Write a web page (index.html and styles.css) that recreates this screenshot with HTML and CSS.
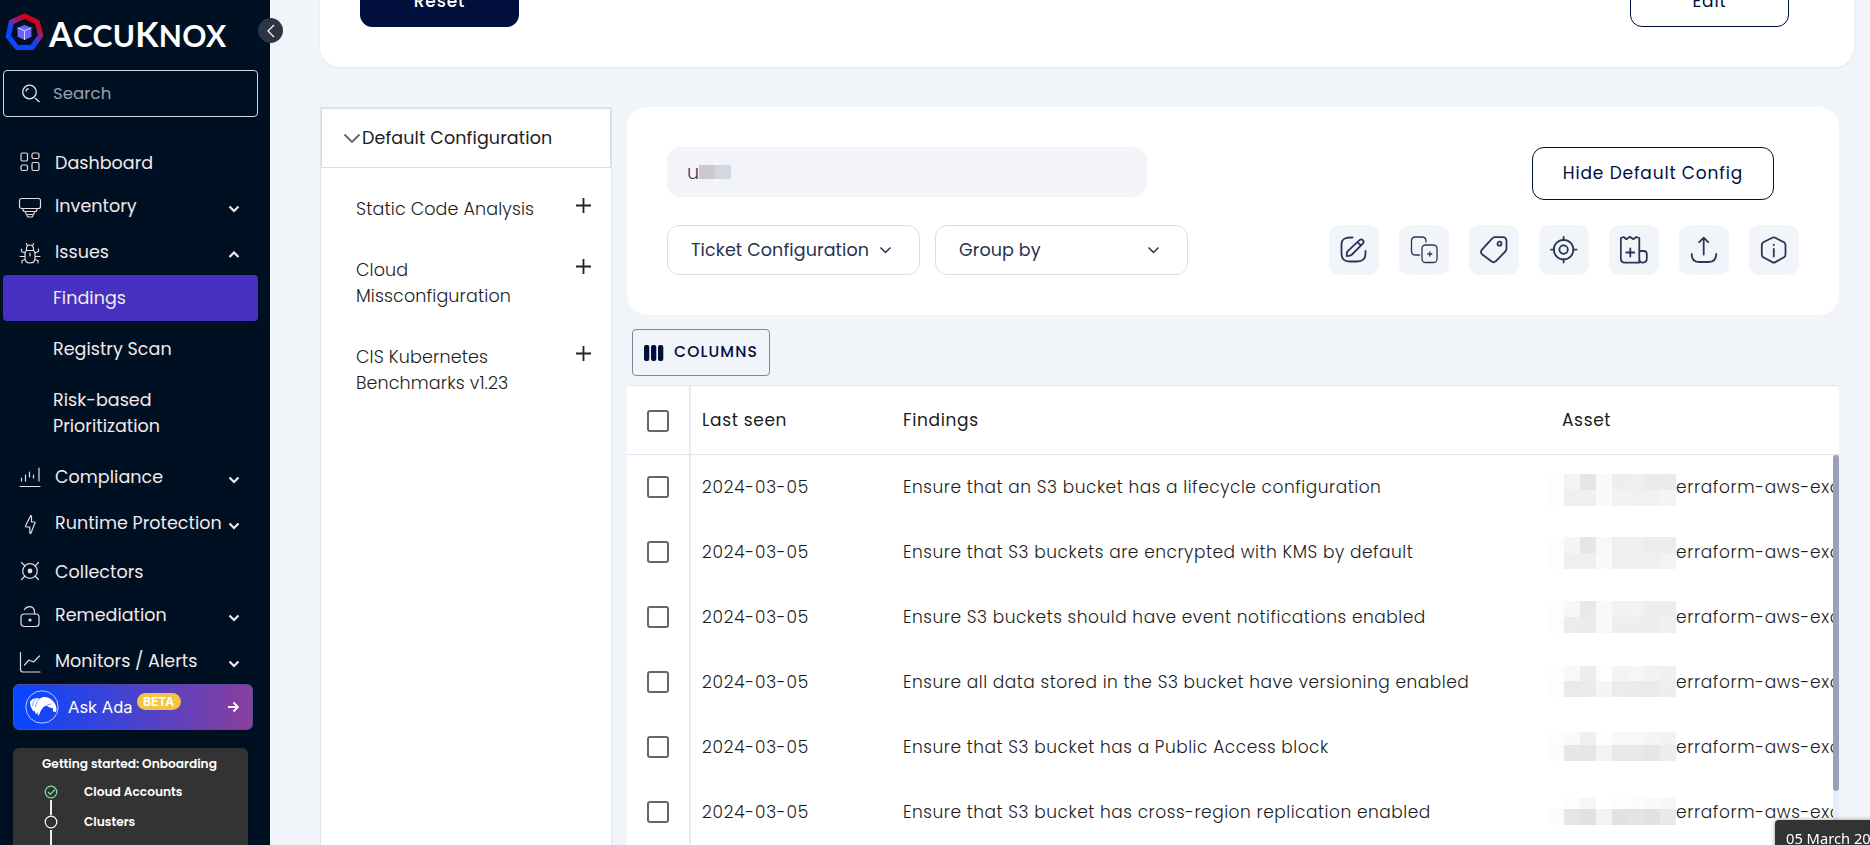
FILE: index.html
```
<!DOCTYPE html>
<html lang="en">
<head>
    <meta charset="UTF-8">
    <meta name="viewport" content="width=device-width, initial-scale=1.0">
    <title>AccuKnox - Findings</title>
    <link rel="stylesheet" href="styles.css">
</head>
<body>
    <aside class="sidebar">
        <div class="logo">
            <svg width="228" height="44" viewBox="0 0 228 44">
                <defs>
                    <linearGradient id="ring" x1="0.75" y1="0.1" x2="0.3" y2="0.8">
                        <stop offset="0.1" stop-color="#d0021b"/>
                        <stop offset="0.45" stop-color="#7a2a9a"/>
                        <stop offset="0.75" stop-color="#0a45ff"/>
                    </linearGradient>
                </defs>
                <path d="M24.500 4.200L37.300 10.200L40.700 23.500L32 35.500L17 35.500L8.300 24.500L11.300 10.200Z" fill="none" stroke="url(#ring)" stroke-width="5.200" stroke-linejoin="round"/>
                <path d="M24.500 13L31.400 15.800V24.700L24.500 28L17.600 24.700V15.800Z" fill="#6a63ff"/>
                <path d="M17.600 15.800L24.500 18.700L31.400 15.800M24.500 18.700V28" fill="none" stroke="#d5d4ff" stroke-width="1"/>
                <text x="49" y="35" textLength="177" class="logo-text"><tspan class="cap">A</tspan>CCU<tspan class="cap">K</tspan>NOX</text>
            </svg>
        </div>
        <button class="collapse">
            <svg width="10" height="14" viewBox="0 0 10 14"><path d="M8 1L2 7l6 6"/></svg>
        </button>

        <label class="search">
            <svg width="20" height="20" viewBox="0 0 20 20"><circle cx="8.500" cy="8" r="6.800"/><path d="M4.800 7.500a3.600 3.600 0 0 1 2.800-3M14 14l4.500 4"/></svg>
            <span>Search</span>
        </label>

        <nav class="menu">
            <a class="item first">
                <svg width="24" height="24" viewBox="0 0 24 24"><rect x="3" y="3" width="6.500" height="8" rx="1.500"/><rect x="14" y="3" width="7" height="5.500" rx="1.500"/><rect x="3" y="15" width="6.500" height="5.500" rx="1.500"/><rect x="14" y="12.500" width="7" height="8" rx="1.500"/></svg>
                <span>Dashboard</span>
            </a>
            <a class="item">
                <svg width="24" height="24" viewBox="0 0 24 24"><rect x="1.500" y="2.500" width="21" height="10" rx="2"/><path d="M5 13v.5q0 2 2 2h10q2 0 2-2V13M7.500 16.500q.3 2 2 2h5q1.700 0 2-2M9 19.500q.5 1.500 1.500 1.500h3q1 0 1.500-1.500"/></svg>
                <span>Inventory</span>
                <svg class="arrow" width="12" height="8" viewBox="0 0 12 8"><path d="M1.500 1.500L6 6l4.500-4.500"/></svg>
            </a>
            <a class="item issues">
                <svg width="24" height="24" viewBox="0 0 24 24"><path d="M8.500 6.500a3.500 3.500 0 0 1 7 0v2h-7zM8.500 8.500q-1.500 1-1.500 3V16q0 5 5 5t5-5v-4.500q0-2-1.500-3M12 11v3M9 3L8.500 1.500M15 3l.5-1.500M7 11L3.500 9.500V7M17 11l3.500-1.500V7M7 14.500H2M17 14.500h5M7.500 17.500L4 18.500V21M16.500 17.500l3.500 1V21"/></svg>
                <span>Issues</span>
                <svg class="arrow" width="12" height="8" viewBox="0 0 12 8"><path d="M1.500 6L6 1.500 10.500 6"/></svg>
            </a>
            <div class="submenu">
                <a class="active">Findings</a>
                <a class="registry">Registry Scan</a>
                <a class="risk">Risk-based<br>Prioritization</a>
            </div>
            <a class="item">
                <svg width="24" height="24" viewBox="0 0 24 24"><path d="M3.500 11v3M7.500 8v6M11.500 5v5M15.500 8v3M21 1v13M2 19.500h20"/></svg>
                <span>Compliance</span>
                <svg class="arrow" width="12" height="8" viewBox="0 0 12 8"><path d="M1.500 1.500L6 6l4.500-4.500"/></svg>
            </a>
            <a class="item">
                <svg width="24" height="24" viewBox="0 0 24 24"><path d="M12.500 3q.5-.7 1 .2V9h2.800q1.200.2.500 1.300L13 20q-1 1.200-1.200 0v-6H8.500q-1.500-.3-.8-1.500z"/></svg>
                <span>Runtime Protection</span>
                <svg class="arrow" width="12" height="8" viewBox="0 0 12 8"><path d="M1.500 1.500L6 6l4.500-4.500"/></svg>
            </a>
            <a class="item collectors">
                <svg width="24" height="24" viewBox="0 0 24 24"><circle cx="12" cy="12" r="7.300"/><circle cx="12" cy="12" r="2.400" class="dot"/><path d="M3.500 3.500L7 7M20.500 3.500L17 7M3.500 20.500L7 17M20.500 20.500L17 17"/></svg>
                <span>Collectors</span>
            </a>
            <a class="item">
                <svg width="24" height="24" viewBox="0 0 24 24"><rect x="3" y="9" width="18" height="12.500" rx="3"/><path d="M6.500 4.500q2-3 5.500-2.800 4.300.5 4.500 5V9"/><circle cx="12" cy="15" r="1.600" class="dot"/></svg>
                <span>Remediation</span>
                <svg class="arrow" width="12" height="8" viewBox="0 0 12 8"><path d="M1.500 1.500L6 6l4.500-4.500"/></svg>
            </a>
            <a class="item">
                <svg width="24" height="24" viewBox="0 0 24 24"><path d="M2.500 1.500v17q0 2.500 2.500 2.500h17M6.500 14l4.500-5 4.500 2L21.500 5"/></svg>
                <span>Monitors / Alerts</span>
                <svg class="arrow" width="12" height="8" viewBox="0 0 12 8"><path d="M1.500 1.500L6 6l4.500-4.500"/></svg>
            </a>
        </nav>

        <div class="ada">
            <svg width="34" height="36" viewBox="0 0 34 36">
                <circle cx="17" cy="18" r="16.200" fill="none" stroke="#b9cbff" stroke-width="1"/>
                <path d="M5 12.500Q8 8 15 9.500 19 7 24 9q6 3 7.500 10l-.5 4-3-.5v-3l-4.500-1.500q-2-2.500-5 0-3 3-4 7l-1.500 2-.5-4-1.500 2.500-1.500-4-1 1Q5 18 5 12.500z" fill="#fff"/>
                <path d="M15 9.500q-4 2-4.500 8.500M10.500 10q-3 2-3 7M21 18q1-3 5-3" fill="none" stroke="#5b84ff" stroke-width=".8"/>
            </svg>
            <span class="ada-name">Ask Ada</span>
            <span class="beta">BETA</span>
            <svg class="go" width="12" height="12" viewBox="0 0 12 12"><path d="M1 6h10M6.500 1.500L11 6l-4.500 4.500"/></svg>
        </div>

        <div class="onboarding">
            <h4>Getting started: Onboarding</h4>
            <div class="step done">
                <svg width="14" height="14" viewBox="0 0 14 14"><circle cx="7" cy="7" r="5.800"/><path d="M4 7l2.300 2.300L11 4.500"/></svg>
                <span>Cloud Accounts</span>
            </div>
            <div class="step">
                <svg width="14" height="14" viewBox="0 0 14 14"><circle cx="7" cy="7" r="5.800"/></svg>
                <span>Clusters</span>
            </div>
        </div>
    </aside>

    <main>
        <section class="card filters">
            <button class="reset">Reset</button>
            <button class="edit">Edit</button>
        </section>

        <div class="columns">
            <section class="config">
                <div class="config-head">
                    <svg width="18" height="11" viewBox="0 0 18 11"><path d="M1.500 1.500L9 9l7.500-7.500"/></svg>
                    <span>Default Configuration</span>
                </div>
                <ul>
                    <li>
                        <span>Static Code Analysis</span>
                        <svg width="15" height="15" viewBox="0 0 15 15"><path d="M7.500 0v15M0 7.500h15"/></svg>
                    </li>
                    <li>
                        <span>Cloud<br>Missconfiguration</span>
                        <svg width="15" height="15" viewBox="0 0 15 15"><path d="M7.500 0v15M0 7.500h15"/></svg>
                    </li>
                    <li>
                        <span>CIS Kubernetes<br>Benchmarks v1.23</span>
                        <svg width="15" height="15" viewBox="0 0 15 15"><path d="M7.500 0v15M0 7.500h15"/></svg>
                    </li>
                </ul>
            </section>

            <section class="results">
                <div class="panel">
                    <div class="row">
                        <div class="query">u<i></i><i></i></div>
                        <button class="hide">Hide Default Config</button>
                    </div>
                    <div class="row">
                        <div class="selects">
                            <div class="select">
                                <span>Ticket Configuration</span>
                                <svg width="13" height="8" viewBox="0 0 13 8"><path d="M1.500 1.500L6.500 6.500l5-5"/></svg>
                            </div>
                            <div class="select">
                                <span>Group by</span>
                                <svg width="13" height="8" viewBox="0 0 13 8"><path d="M1.500 1.500L6.500 6.500l5-5"/></svg>
                            </div>
                        </div>
                        <div class="tools">
                            <button><svg width="28" height="28" viewBox="0 0 28 28"><path d="M12.500 1.500H10.500Q1.500 1.500 1.500 8v9.500Q1.500 25.500 9.500 25.500h7.500q8.500 0 8.500-8V15"/><path d="M19.500 4.200q1.700-1.600 3.300 0t0 3.400L12 18.500q-1.300 1.200-3 1.300l-2.300.2.100-2.500q0-1.500 1.200-2.700zM17.500 6.200l3.500 3.500"/></svg></button>
                            <button><svg class="thin" width="28" height="28" viewBox="0 0 28 28"><path d="M9.500 19H5.500Q1.500 19 1.500 15V5Q1.500 1 5.500 1h6.500q4 0 4 4V6"/><rect x="12" y="9" width="15" height="17.500" rx="3.500"/><path d="M19.800 16v4M17.800 18h4"/></svg></button>
                            <button><svg width="28" height="28" viewBox="0 0 28 28"><path d="M15 1.200h7.500q4 0 4 4V12.500q0 1.800-1.200 3l-9.600 9.800q-2.200 1.800-4.400 0L2 18.200q-2-2.200 0-4.500L12 2.700q1.200-1.500 3-1.500z"/><circle cx="19.500" cy="7.700" r="2"/></svg></button>
                            <button><svg width="28" height="28" viewBox="0 0 28 28"><circle cx="13.600" cy="13.600" r="9.800"/><circle cx="13.600" cy="13.600" r="4.200"/><path d="M13.600 1v3.200M13.600 23.400v3.200M1 13.600h3.200M23.400 13.600h3.200"/></svg></button>
                            <button><svg width="28" height="28" viewBox="0 0 28 28"><path d="M.8 2l3-1 2.500 2.200L9.800.8l3.500 2.400L16.300 1l3 1v24.600H4.800q-4 0-4-4zM19.300 15H23.500q3.300 0 3.300 3V22.600q0 4-4 4-3.500 0-3.500-3.500M10.300 12.500v8M6.300 16.500h8"/></svg></button>
                            <button><svg width="28" height="28" viewBox="0 0 28 28"><path d="M13.700 18.500V2M9.200 6.200L13.700 1.700l4.500 4.500M1.700 18Q1.700 26 9 26h9.500q7.500 0 7.800-8"/></svg></button>
                            <button><svg width="28" height="28" viewBox="0 0 28 28"><path d="M12.300 1.800q1.500-.8 3 0l8.700 4.500q1.500 1 1.500 2.800v9.400q0 1.800-1.500 2.800l-8.700 4.800q-1.500.8-3 0l-9-4.800Q1.800 20.300 1.800 18.500V9.100Q1.800 7.300 3.300 6.300zM13.800 13v7.500M13.800 8.700v.3"/></svg></button>
                        </div>
                    </div>
                </div>

                <button class="columns-btn">
                    <svg width="20" height="16" viewBox="0 0 20 16"><rect width="5.300" height="16" rx="2"/><rect x="7" width="5.300" height="16" rx="2"/><rect x="14" width="5.300" height="16" rx="2"/></svg>
                    <span>COLUMNS</span>
                </button>

                <div class="table">
                    <div class="tr th">
                        <div class="check"><i></i></div>
                        <div>Last seen</div>
                        <div>Findings</div>
                        <div>Asset</div>
                    </div>
                    <div class="body">
                        <div id="rows"></div>
                        <div class="scrollbar"><i></i></div>
                    </div>
                </div>
            </section>
        </div>
    </main>

    <div class="tooltip">05 March 2024</div>

    <script>
        const findings = [
            'Ensure that an S3 bucket has a lifecycle configuration',
            'Ensure that S3 buckets are encrypted with KMS by default',
            'Ensure S3 buckets should have event notifications enabled',
            'Ensure all data stored in the S3 bucket have versioning enabled',
            'Ensure that S3 bucket has a Public Access block',
            'Ensure that S3 bucket has cross-region replication enabled'
        ];

        // redacted part of the asset name, 8 x 2 tiles per row
        const tiles = [
            ['fefdfb f3f3f3 e5e5e5 f9f9f9 eeeeee efefef e9ebea ebebea', 'fdfdfd efefef f0f0f0 fafafa f2f2f2 f1f1f1 f0f1f1 f5f5f3'],
            ['fdfdfd f5f5f5 e6e6e6 f8f8f8 efefef efefef ececec ececec', 'fdfdfd eef0ef efefef fafafa f0f0f0 efefef efefef f3f3f3'],
            ['fefdfb f7f7f7 e9e9e9 f9f9f9 f2f2f2 f3f3f3 eeeeee eeeeee', 'fdfdfd ebedec ebebeb f8f8f8 eeeeee eeeeee ededed f0f0f0'],
            ['fefefe f8f8f8 ededed fdfdfd f4f4f4 f6f6f6 f2f2f2 f0f0f0', 'fefdfb e9eaed ebebeb f5f5f5 ececec ebebeb eaeaea efeeec'],
            ['fdfdfd fafafa f0f0f0 fdfdfd f8f8f8 f8f8f8 f5f5f5 f2f2f2', 'fdfcfb e6e7e9 e6e6e6 f4f4f4 e8e8e8 e8e8e8 e6e6e6 eeedeb'],
            ['ffffff fdfdfd f6f6f6 ffffff fdfdfd fcfcfc fafafa f6f6f6', 'fdfcfb e5e6e8 e1e1e1 f3f3f3 e2e2e2 e4e4e4 e1e1e1 eae9e7']
        ];

        // tiles sit on a 64px grid while the rows are 65px high
        function mosaic(rows, i) {
            let rects = '';
            rows.forEach((row, y) => row.split(' ').forEach((color, x) => {
                rects += `<rect x="${x * 16}" y="${y * 16}" width="16" height="16" fill="#${color}"/>`;
            }));
            return `<svg class="mosaic" width="128" height="32" style="margin-top: ${5 - 2 * i}px">${rects}</svg>`;
        }

        document.getElementById('rows').innerHTML = findings.map((text, i) => `
            <div class="tr">
                <div class="check"><i></i></div>
                <div class="date">2024-03-05</div>
                <div>${text}</div>
                <div class="asset">${mosaic(tiles[i], i)}<span>erraform-aws-example</span></div>
            </div>`).join('');
    </script>
</body>
</html>
```
FILE: styles.css
```
* {
    box-sizing: border-box;
}
body {
    display: flex;
    height: 100vh;
    margin: 0;
    overflow: hidden;
    font-family: Poppins, Inter, sans-serif;
    font-size: 17px;
    background-color: #f1f4f9;
    color: #1c1c1c;
}
button {
    font: inherit;
    padding: 0;
    cursor: pointer;
}
svg {
    flex: none;
}

/* sidebar */
.sidebar {
    position: relative;
    width: 270px;
    height: 845px;
    flex: none;
    background: #001023;
    color: #f3e9e9;
}
.logo {
    height: 70px;
    padding-top: 12px;
}
.logo svg {
    display: block;
}
.logo-text {
    font-family: Lato, sans-serif;
    font-weight: 700;
    font-size: 30px;
    fill: #fff;
}
.logo-text .cap {
    font-size: 34px;
}
.collapse {
    position: absolute;
    left: 258px;
    top: 18px;
    width: 25px;
    height: 25px;
    border: none;
    border-radius: 50%;
    background: #2d3542;
    display: flex;
    align-items: center;
    justify-content: center;
}
.collapse path {
    fill: none;
    stroke: #fff;
    stroke-width: 1.2;
}
.search {
    display: flex;
    align-items: center;
    width: 255px;
    height: 47px;
    margin-left: 3px;
    padding-left: 17px;
    gap: 12px;
    border: 1px solid #d5d9de;
    border-radius: 4px;
    color: #9aa3ad;
    font-size: 16.5px;
    letter-spacing: 0.1px;
}
.search svg {
    fill: none;
    stroke: #e8e8ea;
    stroke-width: 1.3;
}
.menu {
    padding-top: 26px;
    font-size: 17.5px;
    letter-spacing: 0.04px;
}
.item {
    display: flex;
    align-items: center;
    height: 46px;
    padding: 0 30px 0 18px;
    white-space: nowrap;
}
.item span {
    margin-left: 13px;
}
.item svg {
    position: relative;
    top: 2px;
    fill: none;
    stroke: #e6dcdc;
    stroke-width: 1.2;
    stroke-linejoin: round;
    stroke-linecap: round;
}
.item .dot {
    fill: #e6dcdc;
    stroke: none;
}
.item .arrow {
    margin-left: auto;
    top: 3px;
    stroke-width: 2.2;
    stroke: #f3e9e9;
    stroke-linecap: butt;
    stroke-linejoin: miter;
}
.item.first {
    height: 40px;
}
.item.first svg {
    top: -1px;
}
.item.collectors {
    padding-top: 6px;
}
.item.collectors svg {
    top: -1px;
}
.submenu a {
    display: flex;
    align-items: center;
    height: 57px;
    padding-left: 53px;
    line-height: 26px;
}
.submenu .active {
    width: 255px;
    height: 46px;
    margin-left: 3px;
    padding-left: 50px;
    border-radius: 4px;
    background: #4530c0;
}
.submenu .registry {
    padding-bottom: 2px;
}
.submenu .risk {
    height: 70px;
    margin-bottom: 6px;
}
.ada {
    display: flex;
    align-items: center;
    width: 240px;
    height: 46px;
    margin-left: 13px;
    padding: 0 13px 0 11px;
    border: 1px solid #5a4a9e;
    border-radius: 6px;
    background: linear-gradient(90deg, #0546ff, #8a3f9c);
    color: #fff;
    font-family: Inter, sans-serif;
}
.ada-name {
    margin-left: 9px;
    font-size: 16.5px;
}
.beta {
    margin: -12px 0 0 4px;
    width: 44px;
    height: 17px;
    border-radius: 9px;
    background: #f4c542;
    font-size: 12px;
    font-weight: 700;
    line-height: 17px;
    text-align: center;
}
.go {
    margin-left: auto;
}
.go path {
    fill: none;
    stroke: #fff;
    stroke-width: 1.8;
}
.onboarding {
    width: 235px;
    height: 110px;
    margin: 18px 0 0 13px;
    border-radius: 6px 6px 0 0;
    background: #333;
    color: #fff;
    font-size: 12.2px;
    font-weight: 600;
}
.onboarding h4 {
    margin: 0;
    padding: 8px 0 10px 29px;
    font-size: 12.2px;
    font-weight: 600;
    line-height: 15px;
}
.step {
    position: relative;
    display: flex;
    align-items: center;
    height: 30px;
    padding: 0 0 8px 31px;
    gap: 26px;
    line-height: 22px;
}
.step::after {
    content: "";
    position: absolute;
    left: 37px;
    top: 19px;
    width: 2px;
    height: 15px;
    background: #eee;
}
.step svg {
    fill: none;
    stroke: #fff;
    stroke-width: 1.2;
}
.step.done svg {
    stroke: #7ee0a3;
}

/* main area */
main {
    flex: 1;
    min-width: 0;
    padding-left: 50px;
}
.filters {
    display: flex;
    justify-content: space-between;
    align-items: flex-end;
    width: 1534px;
    height: 67px;
    padding: 0 65px 40px 40px;
    border-radius: 0 0 20px 20px;
    background: #fff;
    box-shadow: 0 1px 3px rgba(0, 0, 0, 0.06);
}
.filters button {
    flex: none;
    width: 159px;
    height: 53px;
    border-radius: 12px;
    letter-spacing: 0.9px;
}
.reset {
    border: 1px solid #000f3c;
    background: #000f3c;
    color: #fff;
    font-weight: 500;
}
.edit {
    border: 1px solid #000f3c;
    background: #fff;
    color: #000f3c;
}
.columns {
    display: flex;
    gap: 15px;
    margin-top: 40px;
}
.config {
    width: 292px;
    height: 760px;
    border: 1px solid #e0e4ee;
    background: #fff;
    font-size: 17.5px;
    letter-spacing: 0.12px;
}
.config-head {
    display: flex;
    align-items: center;
    height: 60px;
    padding-left: 21px;
    gap: 1px;
    border: 1px solid #d9dbec;
}
.config-head svg {
    fill: none;
    stroke: #666;
    stroke-width: 1.8;
}
.config ul {
    display: flex;
    flex-direction: column;
    gap: 35px;
    margin: 0;
    padding: 28px 20px 0 35px;
    list-style: none;
}
.config li {
    display: flex;
    justify-content: space-between;
    line-height: 26px;
    font-weight: 300;
}
.config li svg {
    margin-top: 2px;
    stroke: #222;
    stroke-width: 1.8;
}
.results {
    width: 1212px;
}
.panel {
    height: 208px;
    padding: 40px 40px 0;
    border-radius: 20px;
    background: #fff;
}
.row {
    display: flex;
    justify-content: space-between;
    height: 53px;
    margin-bottom: 25px;
}
.query {
    display: flex;
    align-items: center;
    width: 480px;
    height: 50px;
    padding-left: 20px;
    border-radius: 14px;
    background: #f3f4f9;
    color: #2b3a5c;
    font-size: 19px;
    font-weight: 300;
}
.query i {
    width: 16px;
    height: 14px;
    background: #ccc9ce;
}
.query i + i {
    background: #d3d8e0;
}
.hide {
    width: 242px;
    height: 53px;
    margin-right: 25px;
    padding-bottom: 2px;
    border: 1px solid #000f3c;
    border-radius: 12px;
    background: #fff;
    color: #000f3c;
    letter-spacing: 0.85px;
}
.selects {
    display: flex;
    gap: 15px;
}
.select {
    display: flex;
    align-items: center;
    justify-content: space-between;
    width: 253px;
    height: 50px;
    padding: 0 27px 0 23px;
    border: 1px solid #d9deea;
    border-radius: 12px;
    color: #26324f;
    font-size: 17.5px;
    letter-spacing: 0.12px;
    white-space: nowrap;
}
.select svg {
    fill: none;
    stroke: #26324f;
    stroke-width: 1.5;
}
.tools {
    display: flex;
    gap: 20px;
}
.tools button {
    display: flex;
    align-items: center;
    justify-content: center;
    width: 50px;
    height: 50px;
    border: none;
    border-radius: 10px;
    background: #f1f4f9;
}
.tools svg {
    fill: none;
    stroke: #2b3557;
    stroke-width: 1.8;
    stroke-linecap: round;
    stroke-linejoin: round;
}
.tools .thin {
    stroke-width: 1.3;
}
.columns-btn {
    display: flex;
    align-items: center;
    width: 138px;
    height: 47px;
    margin: 14px 0 9px 5px;
    padding: 0 0 2px 11px;
    gap: 10px;
    border: 1px solid #7f87a0;
    border-radius: 4px;
    background: none;
    color: #000f3c;
    font-size: 15.5px;
    font-weight: 500;
    letter-spacing: 1.15px;
}
.columns-btn svg {
    position: relative;
    top: 1px;
    fill: #000f3c;
}

/* findings table */
.table {
    height: 480px;
    border-top: 1px solid #e2e3f3;
    border-radius: 4px 4px 0 0;
    background: #fff;
    overflow: hidden;
}
.tr {
    display: grid;
    grid-template-columns: 75px 201px 659px 277px;
    align-items: center;
    height: 65px;
    font-weight: 300;
    letter-spacing: 0.52px;
    white-space: nowrap;
}
.tr .date {
    letter-spacing: 0.75px;
}
.th {
    height: 69px;
    border-bottom: 1px solid #e2e0f5;
    font-weight: 400;
    letter-spacing: 0.65px;
}
.check {
    display: flex;
    align-items: center;
    align-self: stretch;
    padding-left: 20px;
    background: linear-gradient(90deg, #fff 62px, #e0e0e0 62px, #fff 65px);
}
.th .check {
    padding-top: 2px;
}
.check i {
    width: 22px;
    height: 22px;
    border: 2px solid #666;
    border-radius: 3px;
}
.tr .asset {
    display: flex;
    align-items: center;
    margin-left: -14px;
    overflow: hidden;
    letter-spacing: 0.62px;
}
.body {
    display: flex;
}
#rows {
    width: 1206px;
    flex: none;
    overflow: hidden;
}
#rows .tr:first-child {
    height: 64px;
}
.scrollbar {
    width: 6px;
    height: 420px;
    background: #e9ecf8;
}
.scrollbar i {
    display: block;
    height: 336px;
    border-radius: 3px;
    background: #98a1b9;
}
.tooltip {
    position: fixed;
    left: 1775px;
    top: 820px;
    width: 140px;
    height: 40px;
    padding: 6px 0 0 11px;
    border-radius: 4px;
    background: #333;
    box-shadow: 0 0 4px rgba(0, 0, 0, 0.4);
    color: #fff;
    font-family: "Noto Sans", sans-serif;
    font-size: 14.7px;
    line-height: 24px;
    white-space: nowrap;
}
```
